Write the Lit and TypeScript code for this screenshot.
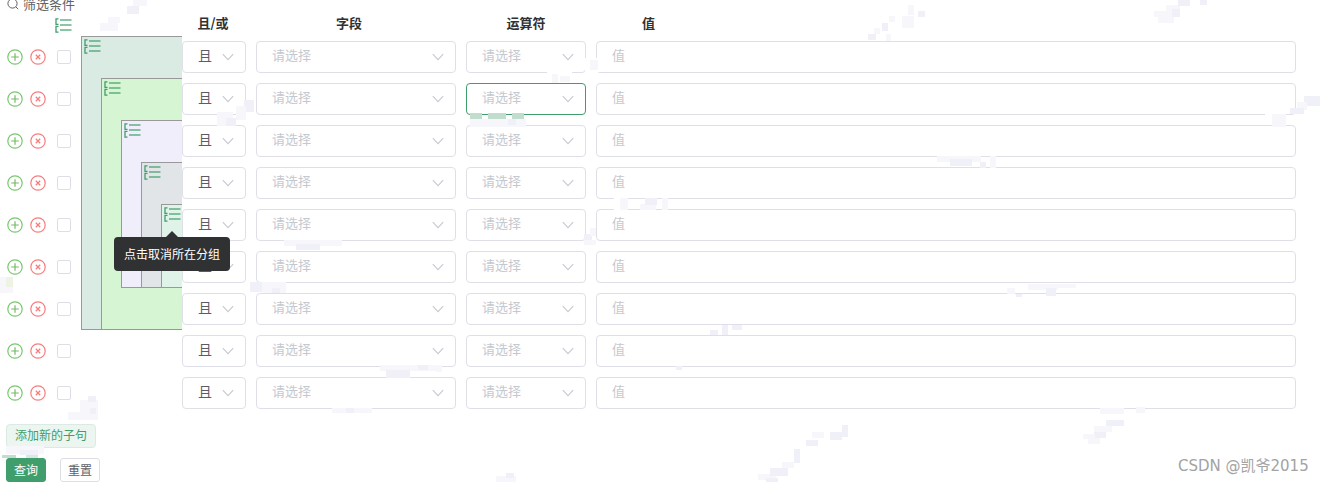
import { LitElement, html, css, svg, unsafeCSS } from "lit";
import { customElement } from "lit/decorators.js";

const GREEN = "#409e6c";
const ROWS = 9;

// nested groups behind the rows: left, top, bottom, fill
const GROUPS = [
  { x: 81, y: 36, b: 330, bg: "#d9ebe2" },
  { x: 101, y: 78, b: 330, bg: "#d6f5d2" },
  { x: 121, y: 120, b: 288, bg: "#f1eefc" },
  { x: 141, y: 162, b: 288, bg: "#e2e5e8" },
  { x: 161, y: 204, b: 288, bg: "#e0f3e9" },
];

// blurred page watermark, x y w h colour
const L = "#f6f6fb";
const M = "#f0f1f8";
const W = "#ffffff";
const G = "#c0ddce";
const PATCHES: [number, number, number, number, string][] = [
  [133, 0, 14, 6, L], [127, 6, 12, 8, M], [108, 17, 12, 6, L], [100, 23, 18, 8, L], [120, 19, 8, 6, W],
  [868, 34, 8, 6, M], [874, 28, 6, 6, L], [882, 23, 6, 8, M], [889, 16, 6, 6, L], [902, 16, 12, 12, L],
  [908, 5, 6, 10, L], [918, 11, 7, 6, M], [886, 34, 5, 7, L],
  [1154, 11, 18, 6, L], [1166, 5, 14, 8, L], [1178, 0, 12, 6, M], [1172, 9, 8, 8, M], [1158, 17, 16, 6, L], [1200, 0, 7, 5, M],
  [1304, 96, 16, 10, M], [1297, 102, 10, 8, L], [1290, 108, 14, 6, M], [1265, 113, 18, 5, W], [1272, 114, 14, 13, L],
  [937, 156, 44, 6, L], [950, 159, 22, 7, M], [980, 162, 6, 6, M], [990, 156, 6, 12, L],
  [614, 198, 12, 12, W], [620, 198, 8, 12, L], [640, 204, 16, 6, L], [645, 198, 12, 7, M], [662, 198, 6, 12, L],
  [284, 240, 58, 6, L], [296, 244, 24, 6, M], [320, 240, 14, 6, L],
  [250, 282, 12, 10, M], [262, 282, 24, 11, L], [272, 288, 8, 5, M],
  [380, 365, 62, 6, L], [386, 370, 24, 8, M], [418, 365, 10, 5, M], [436, 366, 6, 6, L],
  [332, 408, 40, 5, L], [346, 408, 8, 5, M],
  [496, 476, 20, 6, L], [506, 473, 8, 5, M],
  [710, 330, 8, 5, M], [722, 325, 6, 10, M], [732, 325, 10, 5, M], [676, 366, 6, 4, M],
  [1007, 288, 8, 6, L], [1016, 294, 6, 3, M], [1028, 284, 30, 6, L], [1046, 288, 10, 8, M], [1058, 284, 18, 4, L],
  [1100, 408, 24, 6, L], [1136, 407, 9, 6, L], [1106, 420, 18, 6, M], [1094, 426, 18, 6, L],
  [1094, 432, 12, 6, M], [1083, 434, 12, 5, L], [1088, 438, 12, 6, L],
  [758, 474, 18, 6, L], [770, 468, 18, 8, M], [782, 462, 12, 6, L], [794, 449, 6, 14, M],
  [806, 440, 12, 6, M], [812, 432, 12, 6, L], [830, 432, 12, 8, M], [842, 425, 6, 12, M], [766, 478, 12, 4, M],
  [217, 112, 16, 14, L], [226, 118, 10, 8, M], [244, 100, 10, 14, M], [236, 106, 10, 14, L], [246, 112, 10, 8, W],
  [470, 119, 56, 8, L], [470, 113, 12, 6, G], [488, 113, 18, 6, G], [512, 113, 12, 6, G], [508, 119, 8, 6, M],
  [547, 70, 25, 8, W], [552, 74, 6, 9, L], [560, 76, 10, 6, L],
  [585, 58, 15, 14, W], [590, 60, 8, 10, L],
  [584, 234, 8, 8, M], [590, 228, 6, 8, L], [584, 240, 12, 5, L],
  [68, 412, 30, 8, L], [80, 400, 18, 12, L], [88, 396, 8, 6, M], [90, 408, 6, 6, M],
  [6, 446, 38, 8, L], [20, 450, 18, 5, M], [2, 455, 14, 3, G], [26, 455, 12, 3, "#d9e8e0"],
  [0, 277, 13, 16, L], [6, 277, 7, 10, "#eef3e4"],
];

const groupIcon = svg`
  <path d="M3.5 .8H1v5.6h2.5M3.5 8.4H1v5.8h2.5" fill="none" stroke="${GREEN}" stroke-width="1.3" />
  <path d="M5 2h11.5M5 7h11.5M5 12h11.5" fill="none" stroke="${GREEN}" stroke-width="1.7" stroke-opacity=".8" />
`;

@customElement("app-root")
export class AppRoot extends LitElement {
  static styles = css`
    :host {
      display: block;
      position: relative;
      width: 1324px;
      height: 482px;
      overflow: hidden;
      background: #fff;
      font-family: "Noto Sans CJK SC", "Liberation Sans", sans-serif;
      font-size: 13px;
      color: #303133;
    }
    .title {
      display: flex;
      align-items: center;
      gap: 4px;
      height: 14px;
      margin-top: -3px;
      padding-left: 7px;
      line-height: 14px;
      color: #606266;
    }
    .head {
      display: flex;
      height: 20px;
      margin-top: 3px;
      margin-bottom: 7px;
      line-height: 18px;
      font-weight: 700;
    }
    .head-left {
      width: 182px;
      padding-left: 55px;
      box-sizing: border-box;
    }
    .gicon {
      display: block;
      width: 17px;
      height: 15px;
      margin-top: 4px;
    }
    .fields {
      display: grid;
      grid-template-columns: 64px 200px 120px 700px;
      gap: 10px;
      flex: none;
    }
    .h-logic { text-align: center; padding-right: 2px; }
    .h-field { text-align: center; padding-right: 14px; }
    .h-op { text-align: center; }
    .h-val { padding-left: 46px; }
    .row {
      display: flex;
      height: 32px;
      margin-bottom: 10px;
      position: relative;
      z-index: 1;
    }
    .ops {
      width: 182px;
      flex: none;
      display: flex;
      align-items: center;
      padding-left: 7px;
      box-sizing: border-box;
    }
    .ops svg {
      display: block;
      width: 16px;
      height: 16px;
    }
    .ops svg + svg { margin-left: 7px; }
    .check {
      width: 14px;
      height: 14px;
      margin-left: 11px;
      border: 1px solid #dcdfe6;
      border-radius: 2px;
      box-sizing: border-box;
    }
    .box {
      display: flex;
      align-items: center;
      justify-content: space-between;
      height: 32px;
      box-sizing: border-box;
      background: #fff;
      border: 1px solid #dfdfe8;
      border-radius: 4px;
      padding: 0 11px 0 15px;
      color: #c6c8d0;
    }
    .box span {
      line-height: 16px;
      margin-bottom: 4px;
    }
    .box.logic {
      color: #5f5a68;
      font-size: 14px;
    }
    .box.focus { border-color: ${unsafeCSS(GREEN)}; }
    .chev {
      display: block;
      width: 12px;
      height: 8px;
    }
    .clip {
      position: absolute;
      left: 0;
      top: 0;
      width: 182px;
      height: 482px;
      overflow: hidden;
    }
    .group {
      position: absolute;
      right: -200px;
      box-sizing: border-box;
      border: 1px solid #999;
      padding: 2px;
    }
    .group svg {
      display: block;
      width: 17px;
      height: 15px;
    }
    .add {
      display: block;
      width: 90px;
      height: 24px;
      margin: 15px 0 10px 6px;
      box-sizing: border-box;
      border: 1px solid #d9ebe2;
      border-radius: 4px;
      background: #ecf5f0;
      color: ${unsafeCSS(GREEN)};
      font: inherit;
      font-size: 12px;
      padding: 0 0 3px;
    }
    .actions {
      display: flex;
      gap: 14px;
      padding-left: 6px;
    }
    .btn {
      width: 40px;
      height: 24px;
      box-sizing: border-box;
      border: 1px solid #dcdfe6;
      border-radius: 3px;
      background: #fff;
      color: #606266;
      font: inherit;
      font-size: 12px;
      padding: 0 0 2px;
    }
    .btn.primary {
      background: ${unsafeCSS(GREEN)};
      border-color: ${unsafeCSS(GREEN)};
      color: #fff;
    }
    .wm {
      position: absolute;
      inset: 0;
      z-index: 2;
      pointer-events: none;
    }
    .wm i {
      position: absolute;
      display: block;
    }
    .tip {
      position: absolute;
      left: 114px;
      top: 237px;
      z-index: 3;
      width: 116px;
      height: 34px;
      border-radius: 4px;
      background: #303133;
      color: #fff;
      font-size: 12px;
      line-height: 33px;
      text-align: center;
    }
    .tip::before {
      content: "";
      position: absolute;
      left: 52px;
      top: -6px;
      border: 6px solid transparent;
      border-top: 0;
      border-bottom-color: #303133;
    }
    .csdn {
      position: absolute;
      left: 1178px;
      top: 457px;
      z-index: 3;
      font-family: "DejaVu Sans", "Noto Sans CJK SC", sans-serif;
      font-size: 15px;
      line-height: 18px;
      color: #a3a3a3;
      white-space: nowrap;
    }
  `;

  private chevron() {
    return html`<svg class="chev" viewBox="0 0 12 8">
      <path d="M.8 1.2 6 6.6l5.2-5.4" fill="none" stroke="#c6c9d2" stroke-width="1.1" />
    </svg>`;
  }

  private renderRow(i: number) {
    return html`
      <div class="row">
        <div class="ops">
          <svg viewBox="0 0 16 16">
            <circle cx="8" cy="8" r="7.2" fill="none" stroke="#78c870" stroke-width="1.2" />
            <path d="M8 4.2v7.6M4.2 8h7.6" stroke="#78b868" stroke-width="1.2" />
          </svg>
          <svg viewBox="0 0 16 16">
            <circle cx="8" cy="8" r="7.2" fill="none" stroke="#f77c7c" stroke-width="1.2" />
            <path d="M5.8 5.8l4.4 4.4M10.2 5.8l-4.4 4.4" stroke="#f77c7c" stroke-width="1.3" />
          </svg>
          <div class="check"></div>
        </div>
        <div class="fields">
          <div class="box logic"><span>且</span>${this.chevron()}</div>
          <div class="box"><span>请选择</span>${this.chevron()}</div>
          <div class="box ${i === 1 ? "focus" : ""}"><span>请选择</span>${this.chevron()}</div>
          <div class="box"><span>值</span></div>
        </div>
      </div>
    `;
  }

  render() {
    return html`
      <div class="clip">
        ${GROUPS.map(
          (g) => html`<div
            class="group"
            style="left:${g.x}px;top:${g.y}px;height:${g.b - g.y}px;background:${g.bg}"
          >
            <svg viewBox="0 0 17 15">${groupIcon}</svg>
          </div>`
        )}
      </div>
      <div class="title">
        <svg width="12" height="14" viewBox="0 0 12 14">
          <circle cx="5.5" cy="6.5" r="4.6" fill="none" stroke="#606266" stroke-width="1" />
          <path d="M9 10l2.2 2.2" stroke="#606266" stroke-width="1" />
        </svg>
        <span>筛选条件</span>
      </div>
      <div class="head">
        <div class="head-left">
          <svg class="gicon" viewBox="0 0 17 15">${groupIcon}</svg>
        </div>
        <div class="fields">
          <div class="h-logic">且/或</div>
          <div class="h-field">字段</div>
          <div class="h-op">运算符</div>
          <div class="h-val">值</div>
        </div>
      </div>
      ${Array.from({ length: ROWS }, (_, i) => this.renderRow(i))}
      <button class="add">添加新的子句</button>
      <div class="actions">
        <button class="btn primary">查询</button>
        <button class="btn">重置</button>
      </div>
      <div class="wm">
        ${PATCHES.map(
          ([x, y, w, h, c]) =>
            html`<i style="left:${x}px;top:${y}px;width:${w}px;height:${h}px;background:${c}"></i>`
        )}
      </div>
      <div class="tip">点击取消所在分组</div>
      <div class="csdn">CSDN @凯爷2015</div>
    `;
  }
}
